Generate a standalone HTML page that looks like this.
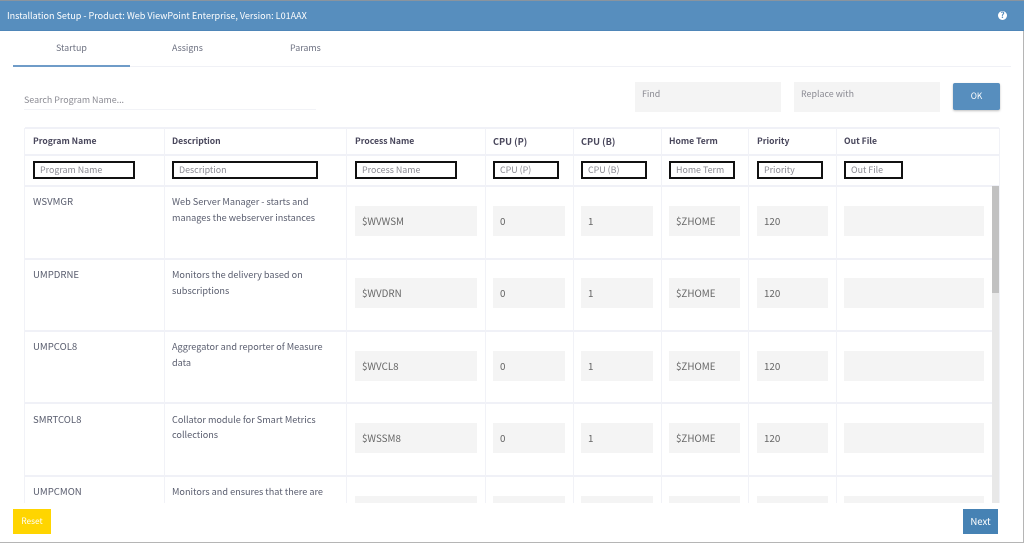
<!DOCTYPE html>
<html><head><meta charset="utf-8"><style>
html,body{margin:0;padding:0;background:#fff}
#p{position:relative;width:1024px;height:543px;overflow:hidden;background:#fff;font-family:"Noto Sans CJK JP","Liberation Sans",sans-serif;font-size:8.9px;color:#595d6e;filter:blur(.3px)}
#p div{position:absolute;box-sizing:border-box;white-space:nowrap}
.h{background:#f0f1f7;height:2px;left:25px;width:974px}
.l{background:#f1f2f7;width:1px;top:128px;height:375px}
.t{line-height:12px}
.b{font-weight:bold;color:#48465b;font-size:8.6px}
.f{height:18px;top:161px;border:2px solid #111;line-height:14px;padding-left:5px;color:#8a8a92;background:#fff}
.i{background:#f4f4f4;height:30px;line-height:30px;padding-left:7px;color:#666;font-size:9.8px}
.c{color:#595d6e;font-size:9.15px}
.n{font-size:9.6px}
</style></head><body><div id="p">
<div style="left:0;top:0;width:1024px;height:31px;background:#578ebe;border-top:1px solid #8a949e;border-bottom:1px solid #4f86b8"></div>
<div class="t" style="left:7px;top:10px;color:#fff;font-size:9.05px">Installation Setup - Product: Web ViewPoint Enterprise, Version: L01AAX</div>
<div style="left:998px;top:11px;width:9px;height:9px;border-radius:50%;background:#fff;color:#578ebe;font-size:8px;font-weight:bold;line-height:9px;text-align:center">?</div>
<div style="left:1023px;top:31px;width:1px;height:512px;background:#b5b5b5"></div>
<div style="left:0;top:542px;width:1024px;height:1px;background:#b5b5b5"></div>

<div class="t" style="left:56px;top:42px;color:#6c7080">Startup</div>
<div class="t" style="left:172px;top:42px;color:#6c7080">Assigns</div>
<div class="t" style="left:290px;top:42px;color:#6c7080">Params</div>
<div style="left:13px;top:66px;width:998px;height:1px;background:#f0f1f6"></div>
<div style="left:13px;top:65px;width:117px;height:2px;background:#6f9cc8"></div>

<div class="t" style="left:24px;top:94px;color:#8a8a92">Search Program Name...</div>
<div style="left:24px;top:109px;width:292px;height:1px;background:#f2f3f7"></div>
<div class="i" style="left:635px;top:82px;width:146px;height:30px;line-height:24px;color:#8a8a92;font-size:8.9px">Find</div>
<div class="i" style="left:794px;top:82px;width:146px;height:30px;line-height:24px;color:#8a8a92;font-size:8.9px">Replace with</div>
<div style="left:953px;top:83px;width:47px;height:27px;background:#578ebe;border-radius:2px;color:#fff;text-align:center;line-height:26px;box-shadow:0 1px 2px rgba(0,0,0,.25);font-size:8.3px">OK</div>

<div class="h" style="top:127px"></div>
<div class="h" style="top:154px"></div>
<div class="h" style="top:185px"></div>
<div class="h" style="top:258px"></div>
<div class="h" style="top:330px"></div>
<div class="h" style="top:402px"></div>
<div class="h" style="top:475px"></div>
<div class="l" style="left:24px"></div>
<div class="l" style="left:164px"></div>
<div class="l" style="left:346px"></div>
<div class="l" style="left:485px"></div>
<div class="l" style="left:573px"></div>
<div class="l" style="left:661px"></div>
<div class="l" style="left:748px"></div>
<div class="l" style="left:836px"></div>
<div class="l" style="left:999px"></div>

<div class="t b" style="left:33px;top:135px">Program Name</div>
<div class="t b" style="left:172px;top:135px">Description</div>
<div class="t b" style="left:355px;top:135px">Process Name</div>
<div class="t b" style="left:493px;top:135px;font-size:9.2px">CPU (P)</div>
<div class="t b" style="left:581px;top:135px;font-size:9.2px">CPU (B)</div>
<div class="t b" style="left:669px;top:135px">Home Term</div>
<div class="t b" style="left:757px;top:135px">Priority</div>
<div class="t b" style="left:844px;top:135px">Out File</div>

<div class="f" style="left:33px;width:102px">Program Name</div>
<div class="f" style="left:172px;width:146px">Description</div>
<div class="f" style="left:355px;width:102px">Process Name</div>
<div class="f" style="left:493px;width:66px">CPU (P)</div>
<div class="f" style="left:581px;width:66px">CPU (B)</div>
<div class="f" style="left:669px;width:66px">Home Term</div>
<div class="f" style="left:757px;width:66px">Priority</div>
<div class="f" style="left:844px;width:59px">Out File</div>

<div class="t c n" style="left:33px;top:195px">WSVMGR</div>
<div class="t c" style="left:172px;top:195px">Web Server Manager - starts and</div>
<div class="t c" style="left:172px;top:211px">manages the webserver instances</div>
<div class="i" style="left:355px;top:206px;width:122px">$WVWSM</div>
<div class="i" style="left:493px;top:206px;width:72px">0</div>
<div class="i" style="left:581px;top:206px;width:72px">1</div>
<div class="i" style="left:669px;top:206px;width:71px">$ZHOME</div>
<div class="i" style="left:757px;top:206px;width:71px">120</div>
<div class="i" style="left:844px;top:206px;width:140px"></div>

<div class="t c n" style="left:33px;top:268px">UMPDRNE</div>
<div class="t c" style="left:172px;top:268px">Monitors the delivery based on</div>
<div class="t c" style="left:172px;top:284px">subscriptions</div>
<div class="i" style="left:355px;top:278px;width:122px">$WVDRN</div>
<div class="i" style="left:493px;top:278px;width:72px">0</div>
<div class="i" style="left:581px;top:278px;width:72px">1</div>
<div class="i" style="left:669px;top:278px;width:71px">$ZHOME</div>
<div class="i" style="left:757px;top:278px;width:71px">120</div>
<div class="i" style="left:844px;top:278px;width:140px"></div>

<div class="t c n" style="left:33px;top:340px">UMPCOL8</div>
<div class="t c" style="left:172px;top:340px">Aggregator and reporter of Measure</div>
<div class="t c" style="left:172px;top:356px">data</div>
<div class="i" style="left:355px;top:351px;width:122px">$WVCL8</div>
<div class="i" style="left:493px;top:351px;width:72px">0</div>
<div class="i" style="left:581px;top:351px;width:72px">1</div>
<div class="i" style="left:669px;top:351px;width:71px">$ZHOME</div>
<div class="i" style="left:757px;top:351px;width:71px">120</div>
<div class="i" style="left:844px;top:351px;width:140px"></div>

<div class="t c n" style="left:33px;top:413px">SMRTCOL8</div>
<div class="t c" style="left:172px;top:413px">Collator module for Smart Metrics</div>
<div class="t c" style="left:172px;top:428px">collections</div>
<div class="i" style="left:355px;top:423px;width:122px">$WSSM8</div>
<div class="i" style="left:493px;top:423px;width:72px">0</div>
<div class="i" style="left:581px;top:423px;width:72px">1</div>
<div class="i" style="left:669px;top:423px;width:71px">$ZHOME</div>
<div class="i" style="left:757px;top:423px;width:71px">120</div>
<div class="i" style="left:844px;top:423px;width:140px"></div>

<div class="t c n" style="left:33px;top:485px">UMPCMON</div>
<div class="t c" style="left:172px;top:485px">Monitors and ensures that there are</div>
<div class="i" style="left:355px;top:496px;width:122px;height:7px"></div>
<div class="i" style="left:493px;top:496px;width:72px;height:7px"></div>
<div class="i" style="left:581px;top:496px;width:72px;height:7px"></div>
<div class="i" style="left:669px;top:496px;width:71px;height:7px"></div>
<div class="i" style="left:757px;top:496px;width:71px;height:7px"></div>
<div class="i" style="left:844px;top:496px;width:140px;height:7px"></div>

<div style="left:992px;top:186px;width:7px;height:317px;background:#e8e8e8"></div>
<div style="left:992px;top:186px;width:7px;height:107px;background:#c1c1c1"></div>
<div style="left:0;top:503px;width:1023px;height:39px;background:#fff"></div>
<div style="left:13px;top:509px;width:38px;height:25px;background:#ffd500;color:#fff;text-align:center;line-height:25px;font-size:8.3px">Reset</div>
<div style="left:963px;top:509px;width:35px;height:25px;background:#4682b4;color:#fff;text-align:center;line-height:25px;font-size:9.6px">Next</div>
</div></body></html>
